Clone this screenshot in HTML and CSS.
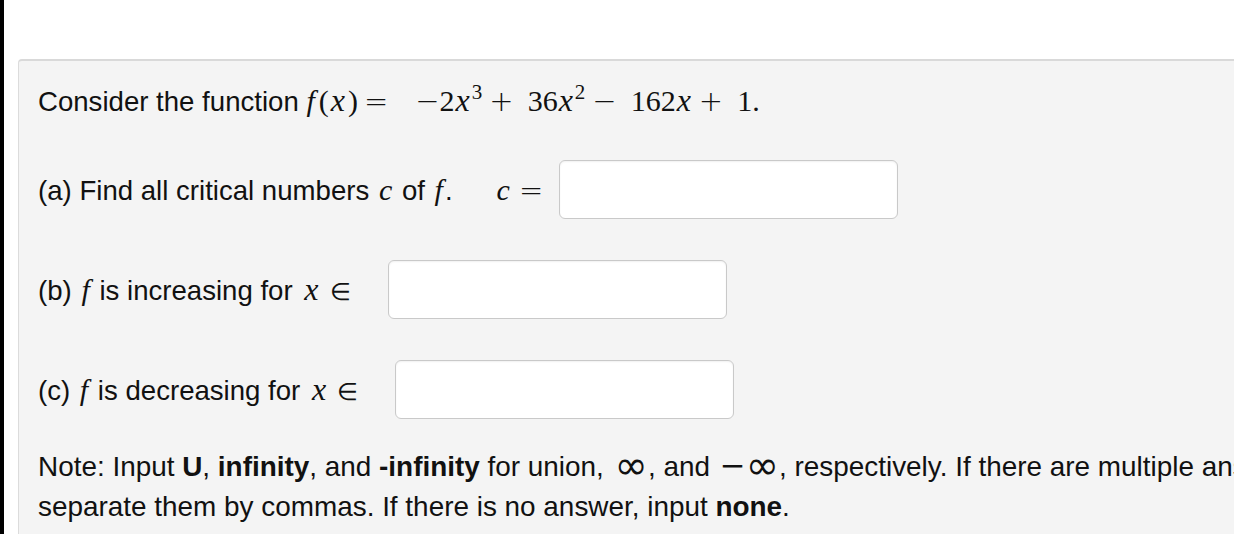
FILE: index.html
```html
<!DOCTYPE html>
<html>
<head>
<meta charset="utf-8">
<link rel="stylesheet" href="styles.css">
</head>
<body>
<div class="page">
  <div class="panel">
    <p class="line">Consider the function <span class="m"><i>f</i><span class="lp">(</span><i class="x">x</i><span class="rp">)</span><span class="op rel">=</span><span class="op un">−</span>2<i class="x">x</i><sup>3</sup><span class="op bin">+</span>36<i class="x">x</i><sup>2</sup><span class="op bin">−</span>162<i class="x">x</i><span class="op bin">+</span>1.</span></p>

    <div class="row">
      <span class="q">(a) Find all critical numbers <i class="mv">c</i> of <i class="mv">f</i>.</span>
      <span class="m lbl"><i>c</i><span class="op rel">=</span></span>
      <input class="ans ans-a" type="text">
    </div>

    <div class="row">
      <span class="q">(b) <i class="mv">f</i> is increasing for <span class="m"><i class="x">x</i><span class="op in">∈</span></span></span>
      <input class="ans ans-b" type="text">
    </div>

    <div class="row">
      <span class="q">(c) <i class="mv">f</i> is decreasing for <span class="m"><i class="x">x</i><span class="op in">∈</span></span></span>
      <input class="ans ans-c" type="text">
    </div>

    <p class="note">Note: Input <b>U</b>, <b>infinity</b>, and <b>-infinity</b> for union, <span class="inf">∞</span>, and <span class="neg">−</span><span class="inf inf2">∞</span>, respectively. If there are multiple answers, separate them by commas. If there is no answer, input <b>none</b>.</p>
  </div>
</div>
</body>
</html>
```

FILE: styles.css
```css
html, body {
  margin: 0;
  padding: 0;
  background: #fff;
  overflow: hidden;
}

.page {
  border-left: 4px solid #000;
  height: 534px;
  padding-top: 59px;
  padding-left: 14px;
  box-sizing: border-box;
  font-family: "Liberation Sans", Arial, sans-serif;
  font-size: 27.6px;
  color: #111;
}

.panel {
  width: 1332px;
  height: 520px;
  background: #f4f4f4;
  border: 1px solid #dcdcdc;
  border-top: 2px solid #d9d9d9;
  border-radius: 4px;
  padding: 19px 19px 20px 19px;
  box-sizing: border-box;
}

.line {
  margin: 0;
  line-height: 40px;
  height: 40px;
}

.m {
  font-family: "Liberation Serif", "Times New Roman", serif;
  font-size: 30px;
  white-space: nowrap;
}

.m i, i.mv {
  font-family: "Liberation Serif", "Times New Roman", serif;
  font-style: italic;
  font-size: 30px;
}

i.x {
  font-size: 32px;
  margin: 0 1px 0 1px;
}

i.mv {
  margin: 0 2px;
}

.m sup {
  font-size: 21px;
  vertical-align: 0;
  position: relative;
  top: -12px;
  margin-left: 1px;
}

.lp {
  margin-left: 4px;
  margin-right: 1px;
}

.rp {
  margin-left: 2px;
}

.op {
  display: inline-block;
  font-family: "DejaVu Sans", sans-serif;
  font-weight: 200;
  font-size: 29px;
}

.rel {
  margin: 0 0 0 6px;
}

.un {
  margin: 0 0 0 27px;
}

.bin {
  margin: 0 14px 0 7px;
}

.in {
  font-size: 24px;
  margin-left: 10px;
}

.q .m i.x {
  margin-left: 4px;
}

.row {
  display: flex;
  align-items: center;
  margin-top: 40px;
  height: 59px;
}

.row + .row {
  margin-top: 41px;
}

.q {
  white-space: nowrap;
}

.lbl {
  margin-left: 44px;
}

.lbl .rel {
  margin-left: 9px;
}

.ans {
  height: 59px;
  box-sizing: border-box;
  background: #fff;
  border: 1px solid #c9c9c9;
  border-radius: 6px;
  box-shadow: inset 0 1px 2px rgba(0, 0, 0, 0.06);
  padding: 0 10px;
  font-size: 27px;
  outline: none;
}

.ans-a {
  width: 339px;
  margin-left: 16px;
}

.ans-b {
  width: 339px;
  margin-left: 37px;
}

.ans-c {
  width: 339px;
  margin-left: 37px;
}

.note {
  margin: 28px 0 0 0;
  line-height: 40px;
  font-size: 27.9px;
}

.note b {
  font-weight: bold;
}

.inf {
  font-family: "DejaVu Sans", sans-serif;
  font-size: 40px;
  line-height: 0;
  vertical-align: -3px;
  margin-left: 3px;
}

.inf2 {
  margin-left: 0;
}

.neg {
  font-family: "DejaVu Sans", sans-serif;
  font-size: 31px;
  line-height: 0;
  margin-left: 2px;
}
```
